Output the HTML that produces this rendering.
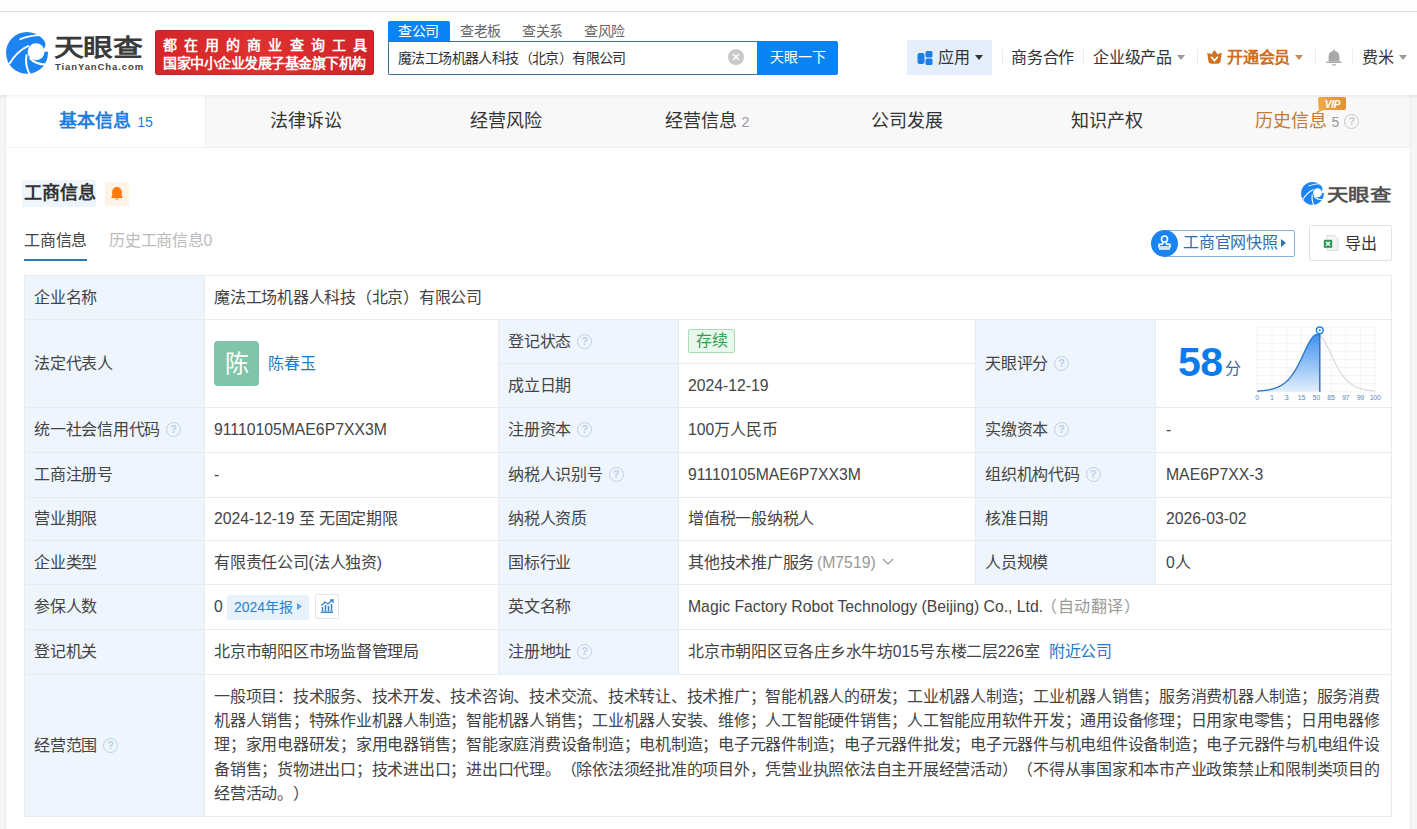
<!DOCTYPE html>
<html lang="zh-CN">
<head>
<meta charset="utf-8">
<style>
*{box-sizing:border-box;margin:0;padding:0}
html,body{width:1417px;height:829px;overflow:hidden}
body{text-spacing-trim:space-all;position:relative;background:#f6f6f6;font-family:"Liberation Sans",sans-serif;color:#444;font-size:16px;letter-spacing:-0.25px}
.a{position:absolute;white-space:nowrap}
.lat{font-size:15.75px;letter-spacing:0}
#topstrip{left:0;top:0;width:1417px;height:11px;background:#fdfdfd}
#topline{left:0;top:11px;width:1417px;height:1px;background:#e2e2e2}
#header{left:0;top:12px;width:1417px;height:83px;background:#fff;box-shadow:0 1px 3px rgba(0,0,0,0.06)}
#card{left:5px;top:95px;width:1406px;height:734px;background:#fff;border-left:1px solid #ebebeb;border-right:1px solid #ebebeb}
#tabbar{left:6px;top:95px;width:1404px;height:53px;background:#f8f8f8;border-bottom:1px solid #f0f0f0}
#tab1{left:6px;top:95px;width:200px;height:53px;background:#fff;border-right:1px solid #eeeeee;border-bottom:1px solid #f4f4f4}
#hshadow{left:0;top:95px;width:1417px;height:4px;background:linear-gradient(rgba(0,0,0,0.045),rgba(0,0,0,0))}
.tab{position:absolute;top:95px;height:53px;line-height:53px;font-size:18px;letter-spacing:0;color:#333;text-align:center;width:200px}
.sep{position:absolute;width:1px;background:#ececec}
.cell{position:absolute;border-right:1px solid #e7ecf1;border-bottom:1px solid #e7ecf1}
.lbl{background:#eef5fc}
.txt{position:absolute;white-space:nowrap;line-height:20px}
.q{display:inline-block;width:15px;height:15px;border:1.2px solid #bdd0e4;border-radius:50%;font-size:11px;line-height:12.5px;margin-left:2px;text-align:center;color:#bdd0e4;vertical-align:2.5px;letter-spacing:0;font-weight:bold}
</style>
</head>
<body>
<div class="a" id="topstrip"></div>
<div class="a" id="topline"></div>
<div class="a" id="header"></div>

<!-- logo -->
<svg class="a" style="left:4px;top:30px" width="46" height="46" viewBox="0 0 829 829">
  <circle cx="415" cy="412" r="378" fill="#1c84f2"/>
  <circle cx="578" cy="392" r="152" fill="#fff"/>
  <path d="M745 225 Q758 300 712 348 L728 394 L860 394 L860 225 Z" fill="#fff"/>
  <path d="M280 170 Q450 95 660 92" stroke="#fff" stroke-width="30" fill="none"/>
  <path d="M448 282 Q230 380 95 615" stroke="#fff" stroke-width="36" fill="none"/>
  <path d="M408 440 Q370 640 468 810" stroke="#fff" stroke-width="36" fill="none"/>
  <path d="M462 500 Q560 620 760 622" stroke="#fff" stroke-width="36" fill="none"/>
</svg>
<div class="a" style="left:53px;top:28px;font-size:29px;font-weight:bold;color:#3a3a3a;letter-spacing:-0.5px;line-height:36px;transform-origin:0 0;transform:translate(1px,5px) scale(1.03,0.83)">天眼查</div>
<div class="a" style="left:55px;top:61px;font-size:9.5px;font-weight:bold;color:#444;letter-spacing:0.9px;line-height:12px">TianYanCha.com</div>

<!-- red banner -->
<div class="a" style="left:155px;top:30px;width:219px;height:45px;border-radius:3px;background:linear-gradient(90deg,#d4262a,#e0302f 50%,#d02428);box-shadow:inset 0 0 0 1px rgba(140,30,30,0.3)"></div>
<div class="a" style="left:163px;top:34.5px;font-size:14px;color:#fff;letter-spacing:7.1px;line-height:20px;font-weight:bold">都在用的商业查询工具</div>
<div class="a" style="left:163px;top:53px;font-size:14px;color:#fff;letter-spacing:-0.5px;line-height:20px;font-weight:bold">国家中小企业发展子基金旗下机构</div>
<!-- search -->
<div class="a" style="left:388px;top:21px;width:62px;height:20px;background:#0a84f5;border-radius:2px 2px 0 0"></div>
<div class="a" style="left:398px;top:21px;font-size:14px;color:#fff;line-height:20px;letter-spacing:-0.5px">查公司</div>
<div class="a" style="left:460px;top:21px;font-size:14px;color:#666;line-height:20px;letter-spacing:-0.5px">查老板</div>
<div class="a" style="left:522px;top:21px;font-size:14px;color:#666;line-height:20px;letter-spacing:-0.5px">查关系</div>
<div class="a" style="left:584px;top:21px;font-size:14px;color:#666;line-height:20px;letter-spacing:-0.5px">查风险</div>
<div class="a" style="left:388px;top:41px;width:370px;height:34px;border:1px solid #3f6f8f;border-right:0;border-radius:0 0 0 2px;background:#fff"></div>
<div class="a" style="left:398px;top:47px;font-size:14px;color:#333;line-height:22px;letter-spacing:-0.6px">魔法工场机器人科技（北京）有限公司</div>
<div class="a" style="left:728px;top:49px;width:16px;height:16px;border-radius:50%;background:#c9c9c9"></div>
<svg class="a" style="left:728px;top:49px" width="16" height="16"><path d="M5 5 L11 11 M11 5 L5 11" stroke="#fff" stroke-width="1.6"/></svg>
<div class="a" style="left:757px;top:41px;width:81px;height:34px;background:#0a84f5;border-radius:0 2px 2px 0"></div>
<div class="a" style="left:770px;top:46px;font-size:14px;color:#fff;line-height:22px;letter-spacing:0">天眼一下</div>

<!-- right nav -->
<div class="a" style="left:907px;top:40px;width:85px;height:35px;background:#e4effb"></div>
<svg class="a" style="left:917px;top:50px" width="16" height="16" viewBox="0 0 16 16">
  <rect x="0.5" y="3" width="7" height="11" rx="2" fill="#1a7fe8"/>
  <rect x="8.5" y="1" width="7" height="6.5" rx="1.5" fill="#1a7fe8"/>
  <rect x="8.5" y="8.5" width="7" height="6.5" rx="1.5" fill="#1a7fe8"/>
</svg>
<div class="a" style="left:938px;top:47px;line-height:22px;color:#333">应用</div>
<svg class="a" style="left:975px;top:55px" width="8" height="5"><path d="M0 0 L8 0 L4 5 Z" fill="#333"/></svg>
<div class="sep" style="left:1002px;top:49px;height:15px"></div>
<div class="a" style="left:1011px;top:47px;line-height:22px;color:#333">商务合作</div>
<div class="sep" style="left:1083px;top:49px;height:15px"></div>
<div class="a" style="left:1093px;top:47px;line-height:22px;color:#333">企业级产品</div>
<svg class="a" style="left:1177px;top:55px" width="8" height="5"><path d="M0 0 L8 0 L4 5 Z" fill="#999"/></svg>
<div class="sep" style="left:1197px;top:49px;height:15px"></div>
<svg class="a" style="left:1207px;top:50px" width="15" height="14" viewBox="0 0 15 14">
  <path d="M7.5 0 L10.5 4.2 L14.8 2.8 L13.6 11 Q13.3 13.8 10.5 13.8 L4.5 13.8 Q1.7 13.8 1.4 11 L0.2 2.8 L4.5 4.2 Z" fill="#d2701e"/>
  <path d="M4.2 6.8 L7.5 10.6 L10.8 6.8" fill="none" stroke="#fff" stroke-width="1.7"/>
</svg>
<div class="a" style="left:1227px;top:47px;line-height:22px;color:#d06c1c;font-weight:bold">开通会员</div>
<svg class="a" style="left:1295px;top:55px" width="8" height="5"><path d="M0 0 L8 0 L4 5 Z" fill="#c98a55"/></svg>
<div class="sep" style="left:1315px;top:49px;height:15px"></div>
<svg class="a" style="left:1325px;top:49px" width="18" height="18" viewBox="0 0 18 18">
  <rect x="8.2" y="0.5" width="1.6" height="2" fill="#a8a8a8"/>
  <path d="M9 2 C5.3 2 3.6 4.6 3.6 8 L3.6 12.6 L14.4 12.6 L14.4 8 C14.4 4.6 12.7 2 9 2 Z" fill="#a8a8a8"/>
  <rect x="1.2" y="12.4" width="15.6" height="1.6" rx="0.8" fill="#a8a8a8"/>
  <rect x="7" y="15.2" width="4" height="1.4" rx="0.7" fill="#a8a8a8"/>
</svg>
<div class="sep" style="left:1352px;top:49px;height:15px"></div>
<div class="a" style="left:1362px;top:47px;line-height:22px;color:#333">费米</div>
<svg class="a" style="left:1399px;top:55px" width="8" height="5"><path d="M0 0 L8 0 L4 5 Z" fill="#999"/></svg>

<!-- CARD -->
<div class="a" id="card"></div>
<div class="a" id="tabbar"></div>
<div class="a" id="tab1"></div>
<div class="tab" style="left:6px;color:#1a7ee0;font-weight:bold">基本信息<span style="font-weight:normal;font-size:14px;margin-left:6px">15</span></div>
<div class="tab" style="left:206px">法律诉讼</div>
<div class="tab" style="left:406px">经营风险</div>
<div class="tab" style="left:607px">经营信息<span style="font-size:14px;color:#999;margin-left:5px">2</span></div>
<div class="tab" style="left:807px">公司发展</div>
<div class="tab" style="left:1007px">知识产权</div>
<div class="tab" style="left:1207px;color:#c47a34">历史信息<span style="font-size:14px;color:#999;margin-left:5px">5</span><span class="q" style="width:15px;height:15px;margin-left:5px;vertical-align:2px;border-color:#c8c8c8;color:#c8c8c8;line-height:12px">?</span></div>
<svg class="a" style="left:1318px;top:97px" width="28" height="15" viewBox="0 0 28 15"><defs><linearGradient id="vg" x1="0" y1="0" x2="1" y2="0"><stop offset="0" stop-color="#f0a94a"/><stop offset="1" stop-color="#e0913a"/></linearGradient></defs><path d="M2 0 L26 0 Q28 0 28 2 L28 11 Q28 13 26 13 L6 13 L1 15 L0.5 11 L0 2 Q0 0 2 0 Z" fill="url(#vg)"/><text x="14.5" y="10.5" font-size="10" font-weight="bold" font-style="italic" text-anchor="middle" fill="#fff" font-family="Liberation Sans">VIP</text></svg>

<div class="a" id="hshadow"></div>
<!--BODY-->
<div class="a" style="left:22px;top:180px;width:74px;height:27px;background:#eef5fb"></div>
<div class="a" style="left:24px;top:181px;font-size:18px;font-weight:bold;line-height:25px;letter-spacing:0;color:#333">工商信息</div>
<div class="a" style="left:105px;top:182px;width:24px;height:24px;background:#fff3e6;border-radius:2px"></div>
<svg class="a" style="left:110px;top:186px" width="14" height="15" viewBox="0 0 14 15"><path d="M7 1 C3.6 1 2.2 3.5 2.2 6.5 L2.2 10 L1 12 L13 12 L11.8 10 L11.8 6.5 C11.8 3.5 10.4 1 7 1 Z" fill="#ff7b0f"/><path d="M5 12.5 Q7 15 9 12.5 Z" fill="#ff7b0f"/></svg>
<div class="a" style="left:24px;top:230px;line-height:22px;color:#444">工商信息</div>
<div class="a" style="left:109px;top:230px;line-height:22px;color:#bbb">历史工商信息<span class="lat">0</span></div>
<div class="a" style="left:24px;top:259px;width:63px;height:2px;background:#2b78b4"></div>
<svg class="a" style="left:1300px;top:181px" width="25" height="25" viewBox="0 0 829 829">
  <circle cx="415" cy="412" r="378" fill="#1c84f2"/>
  <circle cx="582" cy="392" r="148" fill="#fff"/>
  <path d="M745 225 Q758 300 712 348 L728 394 L860 394 L860 225 Z" fill="#fff"/>
  <path d="M280 170 Q450 95 660 92" stroke="#fff" stroke-width="34" fill="none"/>
  <path d="M448 282 Q230 380 95 615" stroke="#fff" stroke-width="38" fill="none"/>
  <path d="M408 440 Q370 640 468 810" stroke="#fff" stroke-width="38" fill="none"/>
  <path d="M462 500 Q560 620 760 622" stroke="#fff" stroke-width="38" fill="none"/>
</svg>
<div class="a" style="left:1326px;top:181px;font-size:21px;font-weight:bold;color:#505050;line-height:26px;letter-spacing:0;transform-origin:0 0;transform:translate(1px,3px) scale(1.02,0.83)">天眼查</div>
<div class="a" style="left:1163px;top:230px;width:132px;height:27px;border:1px solid #86b3da;border-radius:0 2px 2px 0;background:#fff"></div>
<div class="a" style="left:1151px;top:230px;width:27px;height:27px;border-radius:50%;background:#1a84f0"></div>
<svg class="a" style="left:1156px;top:234px" width="17" height="17" viewBox="0 0 17 17"><circle cx="8.5" cy="5" r="3" fill="none" stroke="#fff" stroke-width="1.6"/><path d="M7 8 L6.5 10 L3 10.5 L3 13 L14 13 L14 10.5 L10.5 10 L10 8" fill="none" stroke="#fff" stroke-width="1.6"/><rect x="3" y="14.2" width="11" height="1.5" fill="#fff"/></svg>
<div class="a" style="left:1183px;top:232px;line-height:22px;color:#2a6fb0">工商官网快照</div>
<svg class="a" style="left:1281px;top:239px" width="5" height="8"><path d="M0 0 L5 4 L0 8 Z" fill="#1e74c0"/></svg>
<div class="a" style="left:1309px;top:225px;width:83px;height:36px;border:1px solid #e2e2e2;border-radius:2px;background:#fff"></div>
<svg class="a" style="left:1323px;top:235px" width="16" height="16" viewBox="0 0 16 16"><path d="M4 0.5 L11.5 0.5 L15 4 L15 15.5 L4 15.5 Z" fill="#f4f4f4" stroke="#ddd"/><rect x="0.8" y="4.8" width="8.4" height="8" fill="#2a9a5a"/><path d="M3 6.8 L7 10.8 M7 6.8 L3 10.8" stroke="#fff" stroke-width="1.3"/></svg>
<div class="a" style="left:1345px;top:233px;line-height:22px;color:#333">导出</div>
<div class="a" style="left:24px;top:275px;width:1368px;height:1px;background:#e7ecf1"></div>
<div class="a" style="left:24px;top:275px;width:1px;height:542px;background:#e7ecf1"></div>
<div class="cell lbl" style="left:25px;top:276px;width:180px;height:44px"></div>
<div class="cell" style="left:205px;top:276px;width:1187px;height:44px"></div>
<div class="cell lbl" style="left:25px;top:320px;width:180px;height:88px"></div>
<div class="cell" style="left:205px;top:320px;width:294px;height:88px"></div>
<div class="cell lbl" style="left:499px;top:320px;width:180px;height:44px"></div>
<div class="cell" style="left:679px;top:320px;width:297px;height:44px"></div>
<div class="cell lbl" style="left:499px;top:364px;width:180px;height:44px"></div>
<div class="cell" style="left:679px;top:364px;width:297px;height:44px"></div>
<div class="cell lbl" style="left:976px;top:320px;width:180px;height:88px"></div>
<div class="cell" style="left:1156px;top:320px;width:236px;height:88px"></div>
<div class="cell lbl" style="left:25px;top:408px;width:180px;height:45px"></div>
<div class="cell" style="left:205px;top:408px;width:294px;height:45px"></div>
<div class="cell lbl" style="left:499px;top:408px;width:180px;height:45px"></div>
<div class="cell" style="left:679px;top:408px;width:297px;height:45px"></div>
<div class="cell lbl" style="left:976px;top:408px;width:180px;height:45px"></div>
<div class="cell" style="left:1156px;top:408px;width:236px;height:45px"></div>
<div class="cell lbl" style="left:25px;top:453px;width:180px;height:45px"></div>
<div class="cell" style="left:205px;top:453px;width:294px;height:45px"></div>
<div class="cell lbl" style="left:499px;top:453px;width:180px;height:45px"></div>
<div class="cell" style="left:679px;top:453px;width:297px;height:45px"></div>
<div class="cell lbl" style="left:976px;top:453px;width:180px;height:45px"></div>
<div class="cell" style="left:1156px;top:453px;width:236px;height:45px"></div>
<div class="cell lbl" style="left:25px;top:498px;width:180px;height:43px"></div>
<div class="cell" style="left:205px;top:498px;width:294px;height:43px"></div>
<div class="cell lbl" style="left:499px;top:498px;width:180px;height:43px"></div>
<div class="cell" style="left:679px;top:498px;width:297px;height:43px"></div>
<div class="cell lbl" style="left:976px;top:498px;width:180px;height:43px"></div>
<div class="cell" style="left:1156px;top:498px;width:236px;height:43px"></div>
<div class="cell lbl" style="left:25px;top:541px;width:180px;height:44px"></div>
<div class="cell" style="left:205px;top:541px;width:294px;height:44px"></div>
<div class="cell lbl" style="left:499px;top:541px;width:180px;height:44px"></div>
<div class="cell" style="left:679px;top:541px;width:297px;height:44px"></div>
<div class="cell lbl" style="left:976px;top:541px;width:180px;height:44px"></div>
<div class="cell" style="left:1156px;top:541px;width:236px;height:44px"></div>
<div class="cell lbl" style="left:25px;top:585px;width:180px;height:45px"></div>
<div class="cell" style="left:205px;top:585px;width:294px;height:45px"></div>
<div class="cell lbl" style="left:499px;top:585px;width:180px;height:45px"></div>
<div class="cell" style="left:679px;top:585px;width:713px;height:45px"></div>
<div class="cell lbl" style="left:25px;top:630px;width:180px;height:45px"></div>
<div class="cell" style="left:205px;top:630px;width:294px;height:45px"></div>
<div class="cell lbl" style="left:499px;top:630px;width:180px;height:45px"></div>
<div class="cell" style="left:679px;top:630px;width:713px;height:45px"></div>
<div class="cell lbl" style="left:25px;top:675px;width:180px;height:142px"></div>
<div class="cell" style="left:205px;top:675px;width:1187px;height:142px"></div>
<div class="a" style="left:34px;top:276px;height:43px;line-height:43px;">企业名称</div>
<div class="a" style="left:214px;top:276px;height:43px;line-height:43px;">魔法工场机器人科技（北京）有限公司</div>
<div class="a" style="left:34px;top:320px;height:87px;line-height:87px;">法定代表人</div>
<div class="a" style="left:214px;top:341px;width:45px;height:45px;border-radius:4px;background:#80c5aa;color:#fff;font-size:24px;line-height:45px;text-align:center;letter-spacing:0">陈</div>
<div class="a" style="left:268px;top:320px;height:87px;line-height:87px;color:#1f78c8">陈春玉</div>
<div class="a" style="left:508px;top:320px;height:43px;line-height:43px;">登记状态 <span class="q">?</span></div>
<div class="a" style="left:688px;top:329px;width:47px;height:24px;border:1px solid #a9dcb4;background:#e9f8ec;border-radius:2px;color:#3a9a52;line-height:22px;text-align:center;letter-spacing:0">存续</div>
<div class="a" style="left:508px;top:364px;height:43px;line-height:43px;">成立日期</div>
<div class="a" style="left:688px;top:364px;height:43px;line-height:43px;"><span class="lat">2024-12-19</span></div>
<div class="a" style="left:985px;top:320px;height:87px;line-height:87px;">天眼评分 <span class="q">?</span></div>
<div class="a" style="left:1178px;top:339px;font-size:41px;font-weight:bold;color:#0b7bec;line-height:46px;letter-spacing:-0.5px">58</div><div class="a" style="left:1225px;top:358px;font-size:16px;color:#3f6c9c;line-height:22px;letter-spacing:0">分</div>
<svg class="a" style="left:1250px;top:320px" width="140" height="85" viewBox="0 0 140 85">
<defs><linearGradient id="g1" x1="0" y1="0" x2="0" y2="1"><stop offset="0" stop-color="#3f91f0"/><stop offset="1" stop-color="#e3eefb"/></linearGradient></defs>
<line x1="7.20" y1="7.2" x2="7.20" y2="71.80" stroke="#eef1f5" stroke-width="0.8"/>
<line x1="21.94" y1="7.2" x2="21.94" y2="71.80" stroke="#eef1f5" stroke-width="0.8"/>
<line x1="36.68" y1="7.2" x2="36.68" y2="71.80" stroke="#eef1f5" stroke-width="0.8"/>
<line x1="51.41" y1="7.2" x2="51.41" y2="71.80" stroke="#eef1f5" stroke-width="0.8"/>
<line x1="66.15" y1="7.2" x2="66.15" y2="71.80" stroke="#eef1f5" stroke-width="0.8"/>
<line x1="80.89" y1="7.2" x2="80.89" y2="71.80" stroke="#eef1f5" stroke-width="0.8"/>
<line x1="95.63" y1="7.2" x2="95.63" y2="71.80" stroke="#eef1f5" stroke-width="0.8"/>
<line x1="110.36" y1="7.2" x2="110.36" y2="71.80" stroke="#eef1f5" stroke-width="0.8"/>
<line x1="125.10" y1="7.2" x2="125.10" y2="71.80" stroke="#eef1f5" stroke-width="0.8"/>
<line x1="7.2" y1="7.20" x2="125.10" y2="7.20" stroke="#eef1f5" stroke-width="0.8"/>
<line x1="7.2" y1="15.27" x2="125.10" y2="15.27" stroke="#eef1f5" stroke-width="0.8"/>
<line x1="7.2" y1="23.35" x2="125.10" y2="23.35" stroke="#eef1f5" stroke-width="0.8"/>
<line x1="7.2" y1="31.42" x2="125.10" y2="31.42" stroke="#eef1f5" stroke-width="0.8"/>
<line x1="7.2" y1="39.50" x2="125.10" y2="39.50" stroke="#eef1f5" stroke-width="0.8"/>
<line x1="7.2" y1="47.58" x2="125.10" y2="47.58" stroke="#eef1f5" stroke-width="0.8"/>
<line x1="7.2" y1="55.65" x2="125.10" y2="55.65" stroke="#eef1f5" stroke-width="0.8"/>
<line x1="7.2" y1="63.72" x2="125.10" y2="63.72" stroke="#eef1f5" stroke-width="0.8"/>
<line x1="7.2" y1="71.80" x2="125.10" y2="71.80" stroke="#eef1f5" stroke-width="0.8"/>
<path d="M7.20 71.15 L7.45 71.13 L7.70 71.11 L7.95 71.10 L8.20 71.08 L8.45 71.06 L8.70 71.04 L8.95 71.03 L9.20 71.01 L9.45 70.99 L9.70 70.97 L9.95 70.95 L10.20 70.93 L10.45 70.90 L10.70 70.88 L10.95 70.86 L11.20 70.84 L11.45 70.81 L11.70 70.79 L11.95 70.76 L12.20 70.74 L12.45 70.71 L12.70 70.69 L12.95 70.66 L13.20 70.63 L13.45 70.60 L13.70 70.57 L13.95 70.54 L14.20 70.51 L14.45 70.48 L14.70 70.45 L14.95 70.42 L15.20 70.38 L15.45 70.35 L15.70 70.31 L15.95 70.28 L16.20 70.24 L16.45 70.20 L16.70 70.16 L16.95 70.12 L17.20 70.08 L17.45 70.04 L17.70 70.00 L17.95 69.95 L18.20 69.91 L18.45 69.86 L18.70 69.82 L18.95 69.77 L19.20 69.72 L19.45 69.67 L19.70 69.62 L19.95 69.56 L20.20 69.51 L20.45 69.45 L20.70 69.40 L20.95 69.34 L21.20 69.28 L21.45 69.22 L21.70 69.16 L21.95 69.09 L22.20 69.03 L22.45 68.96 L22.70 68.89 L22.95 68.82 L23.20 68.75 L23.45 68.68 L23.70 68.60 L23.95 68.53 L24.20 68.45 L24.45 68.37 L24.70 68.29 L24.95 68.20 L25.20 68.12 L25.45 68.03 L25.70 67.94 L25.95 67.85 L26.20 67.75 L26.45 67.66 L26.70 67.56 L26.95 67.46 L27.20 67.35 L27.45 67.25 L27.70 67.14 L27.95 67.03 L28.20 66.92 L28.45 66.80 L28.70 66.68 L28.95 66.56 L29.20 66.44 L29.45 66.32 L29.70 66.19 L29.95 66.06 L30.20 65.92 L30.45 65.78 L30.70 65.64 L30.95 65.50 L31.20 65.35 L31.45 65.20 L31.70 65.05 L31.95 64.89 L32.20 64.73 L32.45 64.57 L32.70 64.40 L32.95 64.23 L33.20 64.06 L33.45 63.88 L33.70 63.70 L33.95 63.52 L34.20 63.33 L34.45 63.14 L34.70 62.94 L34.95 62.74 L35.20 62.53 L35.45 62.32 L35.70 62.11 L35.95 61.89 L36.20 61.67 L36.45 61.45 L36.70 61.21 L36.95 60.98 L37.20 60.74 L37.45 60.49 L37.70 60.25 L37.95 59.99 L38.20 59.73 L38.45 59.47 L38.70 59.20 L38.95 58.92 L39.20 58.65 L39.45 58.36 L39.70 58.07 L39.95 57.78 L40.20 57.48 L40.45 57.17 L40.70 56.86 L40.95 56.55 L41.20 56.22 L41.45 55.90 L41.70 55.57 L41.95 55.23 L42.20 54.88 L42.45 54.53 L42.70 54.18 L42.95 53.82 L43.20 53.45 L43.45 53.08 L43.70 52.70 L43.95 52.32 L44.20 51.93 L44.45 51.54 L44.70 51.14 L44.95 50.73 L45.20 50.32 L45.45 49.90 L45.70 49.48 L45.95 49.05 L46.20 48.62 L46.45 48.18 L46.70 47.74 L46.95 47.29 L47.20 46.83 L47.45 46.37 L47.70 45.91 L47.95 45.44 L48.20 44.96 L48.45 44.48 L48.70 44.00 L48.95 43.51 L49.20 43.02 L49.45 42.52 L49.70 42.02 L49.95 41.51 L50.20 41.00 L50.45 40.49 L50.70 39.97 L50.95 39.45 L51.20 38.93 L51.45 38.41 L51.70 37.88 L51.95 37.35 L52.20 36.82 L52.45 36.29 L52.70 35.75 L52.95 35.21 L53.20 34.68 L53.45 34.14 L53.70 33.60 L53.95 33.06 L54.20 32.53 L54.45 31.99 L54.70 31.45 L54.95 30.92 L55.20 30.39 L55.45 29.86 L55.70 29.33 L55.95 28.80 L56.20 28.28 L56.45 27.76 L56.70 27.25 L56.95 26.74 L57.20 26.23 L57.45 25.73 L57.70 25.24 L57.95 24.75 L58.20 24.27 L58.45 23.79 L58.70 23.32 L58.95 22.86 L59.20 22.41 L59.45 21.97 L59.70 21.53 L59.95 21.11 L60.20 20.69 L60.45 20.29 L60.70 19.90 L60.95 19.51 L61.20 19.14 L61.45 18.78 L61.70 18.43 L61.95 18.10 L62.20 17.78 L62.45 17.47 L62.70 17.17 L62.95 16.89 L63.20 16.63 L63.45 16.38 L63.70 16.14 L63.95 15.92 L64.20 15.71 L64.45 15.52 L64.70 15.34 L64.95 15.18 L65.20 15.04 L65.45 14.92 L65.70 14.81 L65.95 14.71 L66.20 14.64 L66.45 14.58 L66.70 14.53 L66.95 14.51 L67.20 14.50 L67.45 14.51 L67.70 14.53 L67.95 14.58 L68.20 14.64 L68.45 14.71 L68.70 14.81 L68.95 14.92 L69.20 15.04 L69.45 15.18 L69.70 15.34 L69.80 71.80 L7.20 71.80 Z" fill="url(#g1)"/>
<path d="M69.70 15.34 L69.95 15.52 L70.20 15.71 L70.45 15.92 L70.70 16.14 L70.95 16.38 L71.20 16.63 L71.45 16.89 L71.70 17.17 L71.95 17.47 L72.20 17.78 L72.45 18.10 L72.70 18.43 L72.95 18.78 L73.20 19.14 L73.45 19.51 L73.70 19.90 L73.95 20.29 L74.20 20.69 L74.45 21.11 L74.70 21.53 L74.95 21.97 L75.20 22.41 L75.45 22.86 L75.70 23.32 L75.95 23.79 L76.20 24.27 L76.45 24.75 L76.70 25.24 L76.95 25.73 L77.20 26.23 L77.45 26.74 L77.70 27.25 L77.95 27.76 L78.20 28.28 L78.45 28.80 L78.70 29.33 L78.95 29.86 L79.20 30.39 L79.45 30.92 L79.70 31.45 L79.95 31.99 L80.20 32.53 L80.45 33.06 L80.70 33.60 L80.95 34.14 L81.20 34.68 L81.45 35.21 L81.70 35.75 L81.95 36.29 L82.20 36.82 L82.45 37.35 L82.70 37.88 L82.95 38.41 L83.20 38.93 L83.45 39.45 L83.70 39.97 L83.95 40.49 L84.20 41.00 L84.45 41.51 L84.70 42.02 L84.95 42.52 L85.20 43.02 L85.45 43.51 L85.70 44.00 L85.95 44.48 L86.20 44.96 L86.45 45.44 L86.70 45.91 L86.95 46.37 L87.20 46.83 L87.45 47.29 L87.70 47.74 L87.95 48.18 L88.20 48.62 L88.45 49.05 L88.70 49.48 L88.95 49.90 L89.20 50.32 L89.45 50.73 L89.70 51.14 L89.95 51.54 L90.20 51.93 L90.45 52.32 L90.70 52.70 L90.95 53.08 L91.20 53.45 L91.45 53.82 L91.70 54.18 L91.95 54.53 L92.20 54.88 L92.45 55.23 L92.70 55.57 L92.95 55.90 L93.20 56.22 L93.45 56.55 L93.70 56.86 L93.95 57.17 L94.20 57.48 L94.45 57.78 L94.70 58.07 L94.95 58.36 L95.20 58.65 L95.45 58.92 L95.70 59.20 L95.95 59.47 L96.20 59.73 L96.45 59.99 L96.70 60.25 L96.95 60.49 L97.20 60.74 L97.45 60.98 L97.70 61.21 L97.95 61.45 L98.20 61.67 L98.45 61.89 L98.70 62.11 L98.95 62.32 L99.20 62.53 L99.45 62.74 L99.70 62.94 L99.95 63.14 L100.20 63.33 L100.45 63.52 L100.70 63.70 L100.95 63.88 L101.20 64.06 L101.45 64.23 L101.70 64.40 L101.95 64.57 L102.20 64.73 L102.45 64.89 L102.70 65.05 L102.95 65.20 L103.20 65.35 L103.45 65.50 L103.70 65.64 L103.95 65.78 L104.20 65.92 L104.45 66.06 L104.70 66.19 L104.95 66.32 L105.20 66.44 L105.45 66.56 L105.70 66.68 L105.95 66.80 L106.20 66.92 L106.45 67.03 L106.70 67.14 L106.95 67.25 L107.20 67.35 L107.45 67.46 L107.70 67.56 L107.95 67.66 L108.20 67.75 L108.45 67.85 L108.70 67.94 L108.95 68.03 L109.20 68.12 L109.45 68.20 L109.70 68.29 L109.95 68.37 L110.20 68.45 L110.45 68.53 L110.70 68.60 L110.95 68.68 L111.20 68.75 L111.45 68.82 L111.70 68.89 L111.95 68.96 L112.20 69.03 L112.45 69.09 L112.70 69.16 L112.95 69.22 L113.20 69.28 L113.45 69.34 L113.70 69.40 L113.95 69.45 L114.20 69.51 L114.45 69.56 L114.70 69.62 L114.95 69.67 L115.20 69.72 L115.45 69.77 L115.70 69.82 L115.95 69.86 L116.20 69.91 L116.45 69.95 L116.70 70.00 L116.95 70.04 L117.20 70.08 L117.45 70.12 L117.70 70.16 L117.95 70.20 L118.20 70.24 L118.45 70.28 L118.70 70.31 L118.95 70.35 L119.20 70.38 L119.45 70.42 L119.70 70.45 L119.95 70.48 L120.20 70.51 L120.45 70.54 L120.70 70.57 L120.95 70.60 L121.20 70.63 L121.45 70.66 L121.70 70.69 L121.95 70.71 L122.20 70.74 L122.45 70.76 L122.70 70.79 L122.95 70.81 L123.20 70.84 L123.45 70.86 L123.70 70.88 L123.95 70.90 L124.20 70.93 L124.45 70.95 L124.70 70.97 L124.95 70.99" fill="none" stroke="#d3d6da" stroke-width="1.1"/>
<path d="M7.20 71.15 L7.45 71.13 L7.70 71.11 L7.95 71.10 L8.20 71.08 L8.45 71.06 L8.70 71.04 L8.95 71.03 L9.20 71.01 L9.45 70.99 L9.70 70.97 L9.95 70.95 L10.20 70.93 L10.45 70.90 L10.70 70.88 L10.95 70.86 L11.20 70.84 L11.45 70.81 L11.70 70.79 L11.95 70.76 L12.20 70.74 L12.45 70.71 L12.70 70.69 L12.95 70.66 L13.20 70.63 L13.45 70.60 L13.70 70.57 L13.95 70.54 L14.20 70.51 L14.45 70.48 L14.70 70.45 L14.95 70.42 L15.20 70.38 L15.45 70.35 L15.70 70.31 L15.95 70.28 L16.20 70.24 L16.45 70.20 L16.70 70.16 L16.95 70.12 L17.20 70.08 L17.45 70.04 L17.70 70.00 L17.95 69.95 L18.20 69.91 L18.45 69.86 L18.70 69.82 L18.95 69.77 L19.20 69.72 L19.45 69.67 L19.70 69.62 L19.95 69.56 L20.20 69.51 L20.45 69.45 L20.70 69.40 L20.95 69.34 L21.20 69.28 L21.45 69.22 L21.70 69.16 L21.95 69.09 L22.20 69.03 L22.45 68.96 L22.70 68.89 L22.95 68.82 L23.20 68.75 L23.45 68.68 L23.70 68.60 L23.95 68.53 L24.20 68.45 L24.45 68.37 L24.70 68.29 L24.95 68.20 L25.20 68.12 L25.45 68.03 L25.70 67.94 L25.95 67.85 L26.20 67.75 L26.45 67.66 L26.70 67.56 L26.95 67.46 L27.20 67.35 L27.45 67.25 L27.70 67.14 L27.95 67.03 L28.20 66.92 L28.45 66.80 L28.70 66.68 L28.95 66.56 L29.20 66.44 L29.45 66.32 L29.70 66.19 L29.95 66.06 L30.20 65.92 L30.45 65.78 L30.70 65.64 L30.95 65.50 L31.20 65.35 L31.45 65.20 L31.70 65.05 L31.95 64.89 L32.20 64.73 L32.45 64.57 L32.70 64.40 L32.95 64.23 L33.20 64.06 L33.45 63.88 L33.70 63.70 L33.95 63.52 L34.20 63.33 L34.45 63.14 L34.70 62.94 L34.95 62.74 L35.20 62.53 L35.45 62.32 L35.70 62.11 L35.95 61.89 L36.20 61.67 L36.45 61.45 L36.70 61.21 L36.95 60.98 L37.20 60.74 L37.45 60.49 L37.70 60.25 L37.95 59.99 L38.20 59.73 L38.45 59.47 L38.70 59.20 L38.95 58.92 L39.20 58.65 L39.45 58.36 L39.70 58.07 L39.95 57.78 L40.20 57.48 L40.45 57.17 L40.70 56.86 L40.95 56.55 L41.20 56.22 L41.45 55.90 L41.70 55.57 L41.95 55.23 L42.20 54.88 L42.45 54.53 L42.70 54.18 L42.95 53.82 L43.20 53.45 L43.45 53.08 L43.70 52.70 L43.95 52.32 L44.20 51.93 L44.45 51.54 L44.70 51.14 L44.95 50.73 L45.20 50.32 L45.45 49.90 L45.70 49.48 L45.95 49.05 L46.20 48.62 L46.45 48.18 L46.70 47.74 L46.95 47.29 L47.20 46.83 L47.45 46.37 L47.70 45.91 L47.95 45.44 L48.20 44.96 L48.45 44.48 L48.70 44.00 L48.95 43.51 L49.20 43.02 L49.45 42.52 L49.70 42.02 L49.95 41.51 L50.20 41.00 L50.45 40.49 L50.70 39.97 L50.95 39.45 L51.20 38.93 L51.45 38.41 L51.70 37.88 L51.95 37.35 L52.20 36.82 L52.45 36.29 L52.70 35.75 L52.95 35.21 L53.20 34.68 L53.45 34.14 L53.70 33.60 L53.95 33.06 L54.20 32.53 L54.45 31.99 L54.70 31.45 L54.95 30.92 L55.20 30.39 L55.45 29.86 L55.70 29.33 L55.95 28.80 L56.20 28.28 L56.45 27.76 L56.70 27.25 L56.95 26.74 L57.20 26.23 L57.45 25.73 L57.70 25.24 L57.95 24.75 L58.20 24.27 L58.45 23.79 L58.70 23.32 L58.95 22.86 L59.20 22.41 L59.45 21.97 L59.70 21.53 L59.95 21.11 L60.20 20.69 L60.45 20.29 L60.70 19.90 L60.95 19.51 L61.20 19.14 L61.45 18.78 L61.70 18.43 L61.95 18.10 L62.20 17.78 L62.45 17.47 L62.70 17.17 L62.95 16.89 L63.20 16.63 L63.45 16.38 L63.70 16.14 L63.95 15.92 L64.20 15.71 L64.45 15.52 L64.70 15.34 L64.95 15.18 L65.20 15.04 L65.45 14.92 L65.70 14.81 L65.95 14.71 L66.20 14.64 L66.45 14.58 L66.70 14.53 L66.95 14.51 L67.20 14.50 L67.45 14.51 L67.70 14.53 L67.95 14.58 L68.20 14.64 L68.45 14.71 L68.70 14.81 L68.95 14.92 L69.20 15.04 L69.45 15.18 L69.70 15.34" fill="none" stroke="#2a74c4" stroke-width="1.3"/>
<line x1="69.80" y1="13.41" x2="69.80" y2="71.80" stroke="#2a6db0" stroke-width="1.4"/>
<circle cx="69.80" cy="10.3" r="3.4" fill="#fff" stroke="#1a84f0" stroke-width="1.5"/>
<circle cx="69.80" cy="10.3" r="1.1" fill="#1a84f0"/>
<text x="7.20" y="80" font-size="7" text-anchor="middle" fill="#5a88bb" font-family="Liberation Sans">0</text>
<text x="21.94" y="80" font-size="7" text-anchor="middle" fill="#5a88bb" font-family="Liberation Sans">1</text>
<text x="36.68" y="80" font-size="7" text-anchor="middle" fill="#5a88bb" font-family="Liberation Sans">3</text>
<text x="51.41" y="80" font-size="7" text-anchor="middle" fill="#5a88bb" font-family="Liberation Sans">15</text>
<text x="66.15" y="80" font-size="7" text-anchor="middle" fill="#5a88bb" font-family="Liberation Sans">50</text>
<text x="80.89" y="80" font-size="7" text-anchor="middle" fill="#5a88bb" font-family="Liberation Sans">85</text>
<text x="95.63" y="80" font-size="7" text-anchor="middle" fill="#5a88bb" font-family="Liberation Sans">97</text>
<text x="110.36" y="80" font-size="7" text-anchor="middle" fill="#5a88bb" font-family="Liberation Sans">99</text>
<text x="125.10" y="80" font-size="7" text-anchor="middle" fill="#5a88bb" font-family="Liberation Sans">100</text>
</svg>
<div class="a" style="left:34px;top:408px;height:44px;line-height:44px;">统一社会信用代码 <span class="q">?</span></div>
<div class="a" style="left:214px;top:408px;height:44px;line-height:44px;"><span class="lat">91110105MAE6P7XX3M</span></div>
<div class="a" style="left:508px;top:408px;height:44px;line-height:44px;">注册资本 <span class="q">?</span></div>
<div class="a" style="left:688px;top:408px;height:44px;line-height:44px;"><span class="lat">100</span>万人民币</div>
<div class="a" style="left:985px;top:408px;height:44px;line-height:44px;">实缴资本 <span class="q">?</span></div>
<div class="a" style="left:1166px;top:408px;height:44px;line-height:44px;"><span class="lat">-</span></div>
<div class="a" style="left:34px;top:453px;height:44px;line-height:44px;">工商注册号</div>
<div class="a" style="left:214px;top:453px;height:44px;line-height:44px;"><span class="lat">-</span></div>
<div class="a" style="left:508px;top:453px;height:44px;line-height:44px;">纳税人识别号 <span class="q">?</span></div>
<div class="a" style="left:688px;top:453px;height:44px;line-height:44px;"><span class="lat">91110105MAE6P7XX3M</span></div>
<div class="a" style="left:985px;top:453px;height:44px;line-height:44px;">组织机构代码 <span class="q">?</span></div>
<div class="a" style="left:1166px;top:453px;height:44px;line-height:44px;"><span class="lat">MAE6P7XX-3</span></div>
<div class="a" style="left:34px;top:498px;height:42px;line-height:42px;">营业期限</div>
<div class="a" style="left:214px;top:498px;height:42px;line-height:42px;"><span class="lat">2024-12-19 </span>至 无固定期限</div>
<div class="a" style="left:508px;top:498px;height:42px;line-height:42px;">纳税人资质</div>
<div class="a" style="left:688px;top:498px;height:42px;line-height:42px;">增值税一般纳税人</div>
<div class="a" style="left:985px;top:498px;height:42px;line-height:42px;">核准日期</div>
<div class="a" style="left:1166px;top:498px;height:42px;line-height:42px;"><span class="lat">2026-03-02</span></div>
<div class="a" style="left:34px;top:541px;height:43px;line-height:43px;">企业类型</div>
<div class="a" style="left:214px;top:541px;height:43px;line-height:43px;">有限责任公司<span class="lat">(</span>法人独资<span class="lat">)</span></div>
<div class="a" style="left:508px;top:541px;height:43px;line-height:43px;">国标行业</div>
<div class="a" style="left:688px;top:541px;height:43px;line-height:43px;">其他技术推广服务<span class="lat" style="color:#999;margin-left:3px">(M7519)</span></div>
<svg class="a" style="left:882px;top:558px" width="12" height="8"><path d="M1 1 L6 6 L11 1" fill="none" stroke="#999" stroke-width="1.2"/></svg>
<div class="a" style="left:985px;top:541px;height:43px;line-height:43px;">人员规模</div>
<div class="a" style="left:1166px;top:541px;height:43px;line-height:43px;"><span class="lat">0</span>人</div>
<div class="a" style="left:34px;top:585px;height:44px;line-height:44px;">参保人数</div>
<div class="a" style="left:214px;top:585px;height:44px;line-height:44px;"><span class="lat">0</span></div>
<div class="a" style="left:227px;top:595px;width:82px;height:25px;background:#e6f2fc;border-radius:2px"></div>
<div class="a" style="left:234px;top:596px;line-height:22px;font-size:14px;letter-spacing:0;color:#2f80c8"><span style="font-size:14px">2024</span>年报</div>
<svg class="a" style="left:297px;top:603px" width="5" height="7"><path d="M0 0 L5 3.5 L0 7 Z" fill="#5aa0e0"/></svg>
<div class="a" style="left:315px;top:594px;width:24px;height:25px;border:1px solid #dfe5ec;border-radius:2px;background:#fff"></div>
<svg class="a" style="left:320px;top:599px" width="14" height="14" viewBox="0 0 14 14"><path d="M1 13.2 L13 13.2" stroke="#2f80c8" stroke-width="1.5"/><path d="M2.5 12 L2.5 8 M5.5 12 L5.5 6 M8.5 12 L8.5 7 M11.5 12 L11.5 5" stroke="#2f80c8" stroke-width="1.5"/><path d="M1.5 6.5 L5 3 L8 5 L12.5 1" fill="none" stroke="#2f80c8" stroke-width="1.3"/><path d="M10 1 L13 1 L13 4" fill="none" stroke="#2f80c8" stroke-width="1.3"/></svg>
<div class="a" style="left:508px;top:585px;height:44px;line-height:44px;">英文名称</div>
<div class="a" style="left:688px;top:585px;height:44px;line-height:44px;"><span class="lat">Magic Factory Robot Technology (Beijing) Co., Ltd.</span><span style="color:#999;margin-left:-2px;letter-spacing:0.5px">（自动翻译）</span></div>
<div class="a" style="left:34px;top:630px;height:44px;line-height:44px;">登记机关</div>
<div class="a" style="left:214px;top:630px;height:44px;line-height:44px;">北京市朝阳区市场监督管理局</div>
<div class="a" style="left:508px;top:630px;height:44px;line-height:44px;">注册地址 <span class="q">?</span></div>
<div class="a" style="left:688px;top:630px;height:44px;line-height:44px;">北京市朝阳区豆各庄乡水牛坊<span class="lat">015</span>号东楼二层<span class="lat">226</span>室<span style="color:#1f78c8;margin-left:9px">附近公司</span></div>
<div class="a" style="left:34px;top:675px;height:141px;line-height:141px;">经营范围 <span class="q">?</span></div>
<div class="a" style="left:214px;top:684.5px;width:1170px;white-space:normal;line-height:24.45px;word-break:break-all">一般项目：技术服务、技术开发、技术咨询、技术交流、技术转让、技术推广；智能机器人的研发；工业机器人制造；工业机器人销售；服务消费机器人制造；服务消费机器人销售；特殊作业机器人制造；智能机器人销售；工业机器人安装、维修；人工智能硬件销售；人工智能应用软件开发；通用设备修理；日用家电零售；日用电器修理；家用电器研发；家用电器销售；智能家庭消费设备制造；电机制造；电子元器件制造；电子元器件批发；电子元器件与机电组件设备制造；电子元器件与机电组件设备销售；货物进出口；技术进出口；进出口代理。（除依法须经批准的项目外，凭营业执照依法自主开展经营活动）（不得从事国家和本市产业政策禁止和限制类项目的经营活动。）</div>
</body>
</html>
